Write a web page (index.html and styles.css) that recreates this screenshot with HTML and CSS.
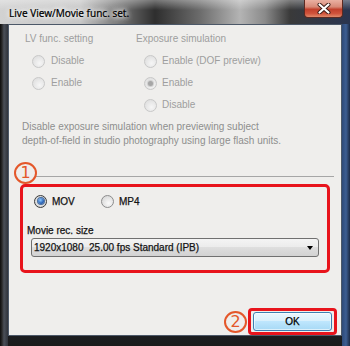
FILE: index.html
```html
<!DOCTYPE html>
<html>
<head>
<meta charset="utf-8">
<link rel="stylesheet" href="styles.css">
</head>
<body>
<div class="window">
  <div class="titlebar">
    <span class="title">Live View/Movie func. set.</span>
    <div class="close">
      <svg width="14" height="11" viewBox="0 0 14 11"><path d="M2.5 1.5 L11.5 9.5 M11.5 1.5 L2.5 9.5" stroke="#3a1a14" stroke-width="4" stroke-linecap="round"/><path d="M2.5 1.5 L11.5 9.5 M11.5 1.5 L2.5 9.5" stroke="#ffffff" stroke-width="2.2" stroke-linecap="round"/></svg>
    </div>
  </div>
  <div class="client">
    <div class="options">
      <div class="col col1">
        <div class="heading">LV func. setting</div>
        <div class="opt"><span class="radio"></span><span>Disable</span></div>
        <div class="opt"><span class="radio"></span><span>Enable</span></div>
      </div>
      <div class="col col2">
        <div class="heading">Exposure simulation</div>
        <div class="opt"><span class="radio"></span><span>Enable (DOF preview)</span></div>
        <div class="opt"><span class="radio checked"></span><span>Enable</span></div>
        <div class="opt"><span class="radio"></span><span>Disable</span></div>
      </div>
    </div>
    <p class="note">Disable exposure simulation when previewing subject<br>depth-of-field in studio photography using large flash units.</p>
    <div class="sep"><span class="callout c1">1</span></div>
    <div class="hl hl1">
      <div class="fmt-row">
        <div class="fmt fmt-mov"><span class="radio on"></span><span>MOV</span></div>
        <div class="fmt"><span class="radio off"></span><span>MP4</span></div>
      </div>
      <div class="label">Movie rec. size</div>
      <div class="select"><span>1920x1080&nbsp; 25.00 fps Standard (IPB)</span><span class="arrow"></span></div>
    </div>
    <div class="footer">
      <span class="callout c2">2</span>
      <div class="hl hl2"><div class="btn">OK</div></div>
    </div>
  </div>
</div>
</body>
</html>
```
FILE: styles.css
```css
html, body {
  margin: 0;
  padding: 0;
  background: #ffffff;
}
.window {
  width: 350px;
  height: 346px;
  box-sizing: border-box;
  padding: 0 8px 10px 8px;
  display: flex;
  flex-direction: column;
  background:
    linear-gradient(90deg, #0c0c0c 0, #2a2a2a 2px, #4a4f58 4px, #30343c 8px, transparent 8px, transparent 342px, #2e4a78 342px, #3d5e92 346px, #1c2a44 350px),
    linear-gradient(180deg, #5a5a5a 0, #3a3a3a 120px, #24324a 260px, #1a1a1a 346px);
  font-family: "Liberation Sans", Arial, sans-serif;
  font-size: 10px;
}
.titlebar {
  height: 24px;
  margin: 0 -8px;
  display: flex;
  align-items: flex-start;
  justify-content: space-between;
  background:
    linear-gradient(180deg, rgba(255,255,255,0.35) 0, rgba(255,255,255,0) 10px),
    linear-gradient(90deg, #d2d2d2 0, #c6c6c6 80px, #6a6a6a 125px, #2e2e2e 155px, #6c6c6c 200px, #b4b4b4 240px, #8a8a8a 265px, #3a3a3a 290px, #2a3550 350px);
}
.title {
  margin: 7px 0 0 9px;
  font-family: "Noto Sans", "Liberation Sans", sans-serif;
  font-size: 10px;
  line-height: 12px;
  color: #000;
  -webkit-text-stroke: 0.2px #000;
  text-shadow: 0 0 4px #fff, 0 0 6px #fff, 0 0 8px rgba(255,255,255,0.9);
}
.close {
  width: 39px;
  height: 18px;
  margin-right: 7px;
  box-sizing: border-box;
  border: 1px solid #5c2a22;
  border-top: none;
  border-radius: 0 0 4px 4px;
  background: linear-gradient(180deg, #eab0a2 0, #d88a78 40%, #c2402c 55%, #d0543c 80%, #e08a6a 100%);
  display: flex;
  align-items: center;
  justify-content: center;
}
.close svg { display: block; }
.client {
  flex: 1;
  box-sizing: border-box;
  border: 1px solid #4c5868;
  background: #efeeec;
  display: flex;
  flex-direction: column;
  color: #9e9e9e;
}
.options {
  display: flex;
  margin: 3px 0 0 16px;
}
.col1 { width: 111px; }
.heading, .opt {
  height: 22px;
  line-height: 22px;
}
.opt {
  display: flex;
  align-items: center;
  gap: 6px;
  padding-left: 7px;
}
.col2 .opt { padding-left: 8px; gap: 5px; }
.radio {
  width: 13px;
  height: 13px;
  box-sizing: border-box;
  border-radius: 50%;
  border: 1px solid #c8c8c8;
  background: radial-gradient(circle at 60% 65%, #f6f6f6 0, #e2e2e2 70%);
  display: flex;
  align-items: center;
  justify-content: center;
  flex: none;
}
.radio.checked::after {
  content: "";
  width: 5px;
  height: 5px;
  border-radius: 50%;
  background: #a6a6a6;
  box-shadow: 0 0 0 1px #d0d0d0;
}
.radio.on {
  border-color: #3a3a3a;
  background: radial-gradient(circle at 50% 50%, #f0f0f0 0, #d6d6d6 80%);
}
.radio.on::after {
  content: "";
  width: 6px;
  height: 6px;
  border-radius: 50%;
  background: radial-gradient(circle at 40% 35%, #8cc8ff 0, #2a64b8 60%, #123a80 100%);
  box-shadow: 0 0 0 1px #4a6fa0;
}
.radio.off {
  border-color: #8c8c8c;
  background: radial-gradient(circle at 60% 65%, #fafafa 0, #d8d8d8 80%);
}
.note {
  margin: 4px 0 0 13px;
  line-height: 14px;
  color: #8e8e8e;
}
.sep {
  position: relative;
  height: 1px;
  margin: 28px 7px 0 13px;
  background: #a6a6a6;
}
.callout {
  position: absolute;
  width: 23px;
  height: 22px;
  box-sizing: border-box;
  border: 2px solid #e4572a;
  border-radius: 50%;
  background: #efeeec;
  color: #e4572a;
  font-family: "DejaVu Sans", sans-serif;
  font-size: 16px;
  line-height: 18px;
  text-align: center;
}
.c1 {
  left: -8px;
  top: -14px;
}
.hl {
  border: 3px solid #e8141c;
  border-radius: 5px;
}
.hl1 {
  width: 310px;
  box-sizing: border-box;
  margin: 7px 0 0 11px;
  padding: 3px 0 13px 0;
  color: #141414;
}
.fmt-row {
  display: flex;
  height: 22px;
  padding-left: 11px;
}
.fmt {
  display: flex;
  align-items: center;
  gap: 5px;
  -webkit-text-stroke: 0.25px #141414;
}
.fmt-mov { width: 67px; }
.label {
  margin: 12px 0 0 4px;
  line-height: 14px;
  -webkit-text-stroke: 0.25px #141414;
}
.select {
  margin-left: 8px;
  width: 288px;
  height: 19px;
  box-sizing: border-box;
  border: 1px solid #707070;
  border-radius: 3px;
  background: linear-gradient(180deg, #f4f4f4 0, #ececec 45%, #dedede 50%, #d2d2d2 100%);
  display: flex;
  align-items: center;
  justify-content: space-between;
  padding: 0 5px 0 2px;
  -webkit-text-stroke: 0.25px #141414;
}
.arrow {
  width: 0;
  height: 0;
  border-left: 3.5px solid transparent;
  border-right: 3.5px solid transparent;
  border-top: 4px solid #000;
}
.footer {
  margin-top: auto;
  display: flex;
  justify-content: flex-end;
  align-items: center;
  padding-right: 4px;
}
.callout.c2 {
  position: static;
  margin-right: 1px;
  margin-top: 0;
  display: block;
}
.hl2 {
  width: 89px;
  height: 27px;
  box-sizing: border-box;
  border-radius: 4px;
  padding: 1px 2px;
}
.btn {
  width: 79px;
  height: 19px;
  box-sizing: border-box;
  border: 1px solid #3c7fb1;
  border-radius: 3px;
  background: linear-gradient(180deg, #eaf6fd 0, #d9f0fc 45%, #bee6fd 50%, #a7d9f5 100%);
  box-shadow: inset 0 0 0 1px rgba(255,255,255,0.6);
  color: #000;
  text-align: center;
  line-height: 17px;
  -webkit-text-stroke: 0.25px #000;
}
```
